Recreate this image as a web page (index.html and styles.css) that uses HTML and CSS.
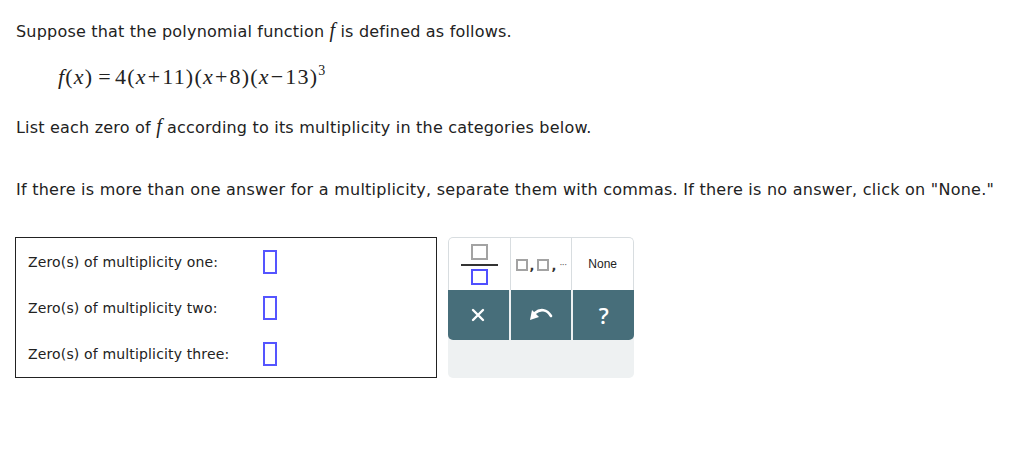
FILE: index.html
```html
<!DOCTYPE html>
<html>
<head>
<meta charset="utf-8">
<link rel="stylesheet" href="styles.css">
</head>
<body>
<div class="page">
  <p class="line l1">Suppose that the polynomial function <span class="fi">f</span> is defined as follows.</p>
  <div class="formula"><span class="i">f</span>(<span class="i">x</span>)<span class="op">=</span>4(<span class="i">x</span><span class="op2">+</span>11)(<span class="i">x</span><span class="op2">+</span>8)(<span class="i">x</span><span class="op2">−</span>13)<sup>3</sup></div>
  <p class="line l3">List each zero of <span class="fi">f</span> according to its multiplicity in the categories below.</p>
  <p class="line l4">If there is more than one answer for a multiplicity, separate them with commas. If there is no answer, click on "None."</p>
  <div class="work">
    <div class="answers">
      <div class="row"><span class="lab">Zero(s) of multiplicity one:</span><span class="box"></span></div>
      <div class="row"><span class="lab">Zero(s) of multiplicity two:</span><span class="box"></span></div>
      <div class="row"><span class="lab">Zero(s) of multiplicity three:</span><span class="box"></span></div>
    </div>
    <div class="pad">
      <div class="top">
        <div class="key frac">
          <span class="sq grey"></span>
          <span class="bar"></span>
          <span class="sq blue"></span>
        </div>
        <div class="key list">
          <span class="seq"><span class="sm"></span><span class="cm">,</span><span class="sm"></span><span class="cm">,</span><span class="dots">···</span></span>
        </div>
        <div class="key none">None</div>
      </div>
      <div class="btns">
        <div class="btn">
          <svg width="14" height="14" viewBox="0 0 14 14"><path d="M2 2 L12 12 M12 2 L2 12" stroke="#fff" stroke-width="2.4" stroke-linecap="round"/></svg>
        </div>
        <div class="btn">
          <svg width="26" height="16" viewBox="0 0 26 16"><path d="M7 6 C12 1.5 19 2 23 9" stroke="#fff" stroke-width="2.6" fill="none" stroke-linecap="round"/><path d="M2 13 L4 3 L11 10 Z" fill="#fff"/></svg>
        </div>
        <div class="btn q">?</div>
      </div>
      <div class="foot"></div>
    </div>
  </div>
</div>
</body>
</html>
```
FILE: styles.css
```css
html, body {
  margin: 0;
  padding: 0;
  background: #fff;
}
.page {
  padding: 19px 0 0 16px;
  font-family: "DejaVu Sans", Verdana, sans-serif;
  color: #222;
}
.line {
  margin: 0;
  font-size: 16px;
  letter-spacing: 0.2px;
  line-height: 22px;
}
.fi {
  font-family: "Liberation Serif", serif;
  font-style: italic;
  font-size: 20px;
  letter-spacing: 0;
}
.formula {
  margin: 19px 0 0 42px;
  height: 30px;
  font-family: "Liberation Serif", serif;
  font-size: 22px;
  letter-spacing: 1.2px;
  line-height: 30px;
  color: #222;
}
.formula .i { font-style: italic; }
.formula .op { margin: 0 3px 0 5px; }
.formula .op2 { margin: 0 1px; }
.formula sup {
  font-size: 14px;
  vertical-align: 9px;
  line-height: 0;
}
.l3 { margin-top: 23px; }
.l4 { margin-top: 40px; letter-spacing: 0.25px; }
.work {
  display: flex;
  align-items: flex-start;
  margin-top: 36px;
  margin-left: -1px;
  gap: 11px;
}
.answers {
  width: 422px;
  height: 141px;
  border: 1px solid #222;
  padding: 12px 0 0 12px;
  box-sizing: border-box;
  display: flex;
  flex-direction: column;
  gap: 22px;
}
.row {
  display: flex;
  align-items: center;
  height: 24px;
}
.lab {
  font-size: 14px;
  letter-spacing: 0.15px;
  width: 235px;
  color: #222;
}
.box {
  width: 14px;
  height: 24px;
  box-sizing: border-box;
  border: 2px solid #5555ff;
}
.pad {
  width: 186px;
  height: 141px;
  display: flex;
  flex-direction: column;
  border-radius: 5px;
  overflow: hidden;
  background: #eef1f2;
}
.top {
  display: flex;
  height: 53px;
  border: 1px solid #d8dde0;
  border-bottom: none;
  border-radius: 5px 5px 0 0;
  background: #fff;
  box-sizing: border-box;
}
.key {
  flex: 1;
  display: flex;
  align-items: center;
  justify-content: center;
  border-left: 1px solid #d8dde0;
}
.key:first-child { border-left: none; }
.frac {
  flex-direction: column;
}
.sq {
  width: 17px;
  height: 16px;
  box-sizing: border-box;
}
.sq.grey { border: 2px solid #a3a3a3; }
.sq.blue { border: 2px solid #5050ff; }
.bar {
  width: 37px;
  height: 2px;
  background: #333;
  margin: 4px 0 3px;
}
.seq {
  display: block;
  white-space: nowrap;
  line-height: 14px;
  padding-top: 2px;
}
.sm {
  display: inline-block;
  vertical-align: -1px;
  width: 12px;
  height: 12px;
  box-sizing: border-box;
  border: 2px solid #a3a3a3;
}
.cm {
  display: inline-block;
  font-size: 13px;
  font-weight: bold;
  color: #333;
  margin: 0 3px 0 2px;
}
.dots {
  display: inline-block;
  font-size: 9px;
  color: #555;
  letter-spacing: -0.5px;
  vertical-align: 2px;
}
.none {
  font-family: "Liberation Sans", Arial, sans-serif;
  font-size: 12px;
  color: #222;
}
.btns {
  display: flex;
  height: 50px;
  background: #476e7a;
  border-radius: 0 0 5px 5px;
}
.btn {
  flex: 1;
  display: flex;
  align-items: center;
  justify-content: center;
  border-left: 2px solid #eef1f2;
}
.btn:first-child { border-left: none; }
.q {
  color: #fff;
  font-family: "Open Sans", sans-serif;
  font-size: 22px;
  font-weight: 600;
}
.foot { flex: 1; }
```
